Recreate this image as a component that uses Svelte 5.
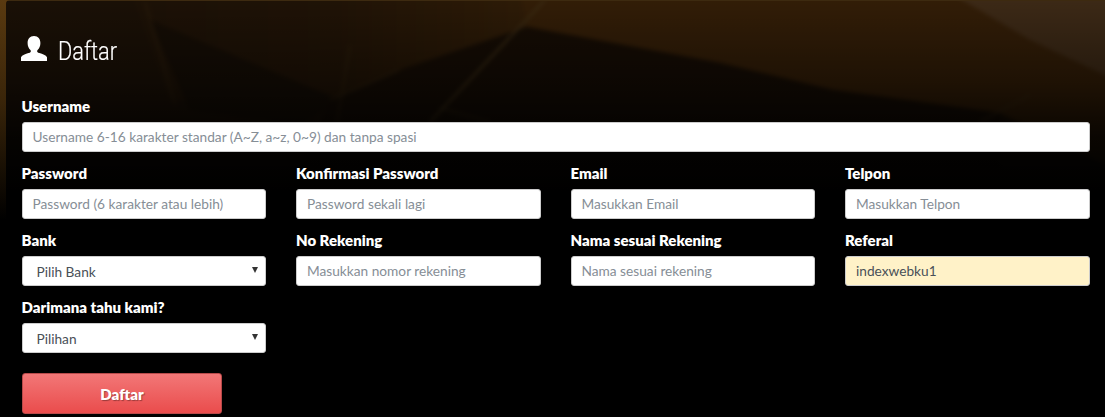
<script>
  const rows = [
    [{ l: 'Password', p: 'Password (6 karakter atau lebih)' }, { l: 'Konfirmasi Password', p: 'Password sekali lagi' }, { l: 'Email', p: 'Masukkan Email' }, { l: 'Telpon', p: 'Masukkan Telpon' }],
    [{ l: 'Bank', s: 'Pilih Bank' }, { l: 'No Rekening', p: 'Masukkan nomor rekening' }, { l: 'Nama sesuai Rekening', p: 'Nama sesuai rekening' }, { l: 'Referal', v: 'indexwebku1' }],
    [{ l: 'Darimana tahu kami?', s: 'Pilihan' }]
  ];
  const fields = rows.flat();
</script>

<div class="page">
  <svg class="bg" viewBox="0 0 1105 417" preserveAspectRatio="none" aria-hidden="true">
    <defs>
      <linearGradient id="fade" x1="0" y1="0" x2="0" y2="1">
        <stop offset="0" stop-color="#000" stop-opacity="0" />
        <stop offset="0.2" stop-color="#000" stop-opacity="0.4" />
        <stop offset="0.33" stop-color="#000" stop-opacity="0.8" />
        <stop offset="0.46" stop-color="#000" stop-opacity="1" />
      </linearGradient>
      <linearGradient id="band" gradientUnits="userSpaceOnUse" x1="130" y1="0" x2="540" y2="0">
        <stop offset="0" stop-color="#1c1106" />
        <stop offset="0.5" stop-color="#201306" />
        <stop offset="1" stop-color="#2f1c07" />
      </linearGradient>
      <filter id="soft" color-interpolation-filters="sRGB"><feGaussianBlur stdDeviation="2" /></filter>
    </defs>
    <g filter="url(#soft)">
      <rect x="-10" y="-10" width="1125" height="437" fill="#1a1006" />
      <polygon points="130,-10 560,-10 527,27 400,70 330,100 170,100" fill="url(#band)" />
      <polygon points="520,-10 1115,-10 1115,170 1000,113 833,90 720,63 527,27" fill="#321d07" />
      <polygon points="150,20 340,100 300,125 190,110" fill="#150d05" />
      <polygon points="527,27 720,63 833,90 1000,113 1000,170 300,170 330,100 400,70" fill="#150c04" />
      <polygon points="945,-10 1115,-10 1115,80 1030,40" fill="#3c2916" />
      <g fill="none" stroke="#3b2c14" stroke-width="2">
        <path d="M545,0 L430,122" />
        <path d="M145,2 L175,105" opacity="0.35" />
        <path d="M400,70 L330,100" opacity="0.4" />
        <path d="M350,45 L335,135" opacity="0.4" />
        <path d="M1030,95 L980,122" opacity="0.6" />
        <path d="M440,108 L490,122" opacity="0.5" />
      </g>
    </g>
    <rect width="1105" height="417" fill="url(#fade)" />
    <rect width="1105" height="1" fill="#3d2a10" />
    <path d="M6,0 h4 a4,4 0 0 0 -4,4 z" fill="#5a3a10" />
  </svg>
  <div class="strip"></div>

  <form class="form">
    <h1 class="title">
      <svg class="user" viewBox="0 0 26 25" aria-hidden="true">
        <path d="M13 0c4.200 0 6.400 3 6.400 7 0 3-1.100 5.400-2.800 7-.5.500-.6 1.300-.2 1.900.4.600 1 .8 2 1.200 3.200 1.100 6.600 2 7.600 4.100V25H0V21.200c1-2.100 4.400-3 7.600-4.100 1-.4 1.600-.6 2-1.200.4-.6.3-1.400-.2-1.900-1.700-1.600-2.800-4-2.800-7C6.600 3 8.800 0 13 0z" fill="#fff" />
      </svg>
      <span>Daftar</span>
    </h1>

    <div class="full field">
      <label for="username">Username</label>
      <input id="username" type="text" placeholder="Username 6-16 karakter standar (A~Z, a~z, 0~9) dan tanpa spasi" />
    </div>

    <div class="grid">
      {#each fields as f, i}
        <div class="field">
          <label for={'f' + i}>{f.l}</label>
          {#if f.s}
            <div class="select" id={'f' + i}><span>{f.s}</span><i class="caret"></i></div>
          {:else if f.v}
            <input id={'f' + i} class="filled" type="text" value={f.v} />
          {:else}
            <input id={'f' + i} type="text" placeholder={f.p} />
          {/if}
        </div>
      {/each}
    </div>

    <button type="button" class="submit">Daftar</button>
  </form>
</div>

<style>
  :global(body) {
    margin: 0;
    background: #000;
  }
  .page {
    position: relative;
    width: 1105px;
    height: 417px;
    overflow: hidden;
    font-family: "Lato", "Open Sans", sans-serif;
    color: #fff;
  }
  .bg {
    position: absolute;
    inset: 0;
    width: 100%;
    height: 100%;
  }
  .strip {
    position: absolute;
    left: 0;
    top: 0;
    width: 6px;
    height: 220px;
    background: linear-gradient(180deg, #5a3a10 0%, #3a2509 45%, #000 100%);
  }
  .form {
    position: relative;
    padding: 0 15px 0 21.5px;
    display: flex;
    flex-direction: column;
  }
  .title {
    display: flex;
    align-items: flex-start;
    gap: 11px;
    margin: 36px 0 0;
    height: 28px;
    font-family: "Roboto", sans-serif;
    font-size: 25px;
    font-weight: 300;
    line-height: 28px;
    -webkit-text-stroke: 0.2px #fff;
  }
  .title span {
    display: inline-block;
    transform: scaleX(0.87);
    transform-origin: left center;
    margin-top: 2px;
  }
  .user {
    width: 26px;
    height: 25px;
    flex: none;
    margin-left: -0.5px;
  }
  .full {
    margin-top: 32px;
  }
  .grid {
    display: grid;
    grid-template-columns: repeat(4, 244.5px);
    column-gap: 30px;
    row-gap: 11px;
    margin-top: 11px;
  }
  .field {
    display: flex;
    flex-direction: column;
  }
  label {
    display: block;
    height: 20px;
    margin-bottom: 6px;
    padding-top: 1px;
    box-sizing: content-box;
    margin-top: -1px;
    font-size: 15px;
    font-weight: 800;
    line-height: 20px;
    color: #fff;
  }
  input,
  .select {
    box-sizing: border-box;
    width: 100%;
    height: 30px;
    border: 1px solid #ccc;
    border-radius: 3px;
    background: #fff;
    padding: 0 10px 2px;
    margin: 0;
    font-family: "Lato", sans-serif;
    font-size: 13.700px;
    color: #495057;
    outline: none;
  }
  input::placeholder {
    color: #868e96;
    opacity: 1;
  }
  input.filled {
    background: #fff2c8;
  }
  .select {
    display: flex;
    align-items: center;
    justify-content: space-between;
    padding: 0 7px 0 14px;
  }
  .caret {
    width: 0;
    height: 0;
    margin-top: -3px;
    border-left: 3px solid transparent;
    border-right: 3px solid transparent;
    border-top: 6px solid #333;
  }
  .submit {
    box-sizing: border-box;
    width: 200px;
    height: 41px;
    margin-top: 20px;
    margin-left: 0.5px;
    padding: 0;
    border: 1px solid #b84a4a;
    border-radius: 3px;
    background: linear-gradient(180deg, #f27777 0%, #ea4c4c 100%);
    color: #fff;
    font-family: "Lato", sans-serif;
    font-size: 15px;
    font-weight: 800;
    text-shadow: 1px 1px 1px rgba(0, 0, 0, 0.35);
  }
</style>
